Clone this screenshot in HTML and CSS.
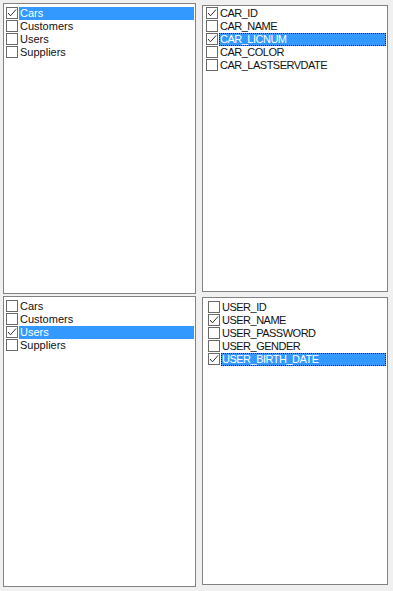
FILE: index.html
```html
<!DOCTYPE html>
<html>
<head>
<meta charset="utf-8">
<link rel="stylesheet" href="styles.css">
</head>
<body>
<div class="form">
  <div class="list list-tl">
    <div class="row"><span class="cb checked"><svg viewBox="0 0 10 10"><polyline points="1,5 3.5,7.8 9,1.5"/></svg></span><span class="label sel">Cars</span></div>
    <div class="row"><span class="cb"></span><span class="label">Customers</span></div>
    <div class="row"><span class="cb"></span><span class="label">Users</span></div>
    <div class="row"><span class="cb"></span><span class="label">Suppliers</span></div>
  </div>
  <div class="list list-tr fields">
    <div class="row"><span class="cb checked"><svg viewBox="0 0 10 10"><polyline points="1,5 3.5,7.8 9,1.5"/></svg></span><span class="label">CAR_ID</span></div>
    <div class="row"><span class="cb"></span><span class="label">CAR_NAME</span></div>
    <div class="row"><span class="cb checked"><svg viewBox="0 0 10 10"><polyline points="1,5 3.5,7.8 9,1.5"/></svg></span><span class="label sel focus">CAR_LICNUM</span></div>
    <div class="row"><span class="cb"></span><span class="label">CAR_COLOR</span></div>
    <div class="row"><span class="cb"></span><span class="label">CAR_LASTSERVDATE</span></div>
  </div>
  <div class="list list-bl">
    <div class="row"><span class="cb"></span><span class="label">Cars</span></div>
    <div class="row"><span class="cb"></span><span class="label">Customers</span></div>
    <div class="row"><span class="cb checked"><svg viewBox="0 0 10 10"><polyline points="1,5 3.5,7.8 9,1.5"/></svg></span><span class="label sel">Users</span></div>
    <div class="row"><span class="cb"></span><span class="label">Suppliers</span></div>
  </div>
  <div class="list list-br fields">
    <div class="row"><span class="cb"></span><span class="label">USER_ID</span></div>
    <div class="row"><span class="cb checked"><svg viewBox="0 0 10 10"><polyline points="1,5 3.5,7.8 9,1.5"/></svg></span><span class="label">USER_NAME</span></div>
    <div class="row"><span class="cb"></span><span class="label">USER_PASSWORD</span></div>
    <div class="row"><span class="cb"></span><span class="label">USER_GENDER</span></div>
    <div class="row"><span class="cb checked"><svg viewBox="0 0 10 10"><polyline points="1,5 3.5,7.8 9,1.5"/></svg></span><span class="label sel focus">USER_BIRTH_DATE</span></div>
  </div>
</div>
</body>
</html>
```
FILE: styles.css
```css
* { box-sizing: border-box; }
html, body {
  margin: 0;
  padding: 0;
  background: #f0f0f0;
  width: 393px;
  height: 591px;
  overflow: hidden;
}
body {
  font-family: "Liberation Sans", Arial, sans-serif;
  font-size: 11px;
  color: #111;
}
.form {
  display: grid;
  grid-template-columns: 193px 186px;
  grid-template-rows: 291px 291px;
  column-gap: 6px;
  row-gap: 2px;
  padding: 3px 0 0 3px;
}
.list {
  background: #fff;
  border: 1px solid #828282;
  display: flex;
  flex-direction: column;
}
.list-tl { padding: 3px 1px 0 2px; }
.list-tr { margin-top: 2px; height: 287px; padding: 1px 1px 0 3px; }
.list-bl { padding: 3px 1px 0 2px; }
.list-br { margin-top: 1px; height: 288px; padding: 3px 1px 0 5px; }
.fields .label { letter-spacing: -0.5px; }
.row {
  display: flex;
  align-items: flex-start;
  height: 13px;
}
.cb {
  flex: none;
  width: 12px;
  height: 12px;
  border: 1px solid #6a6a6a;
  background: #fff;
  display: flex;
  align-items: center;
  justify-content: center;
}
.cb svg {
  width: 10px;
  height: 10px;
  fill: none;
  stroke: #333;
  stroke-width: 1;
}
.label {
  flex: 1;
  margin-left: 1px;
  padding-left: 1px;
  height: 13px;
  line-height: 13px;
  white-space: nowrap;
}
.sel {
  background: #3399ff;
  color: #fff;
}
.focus {
  outline: 1px dotted #1a1a1a;
  outline-offset: -1px;
}
```
